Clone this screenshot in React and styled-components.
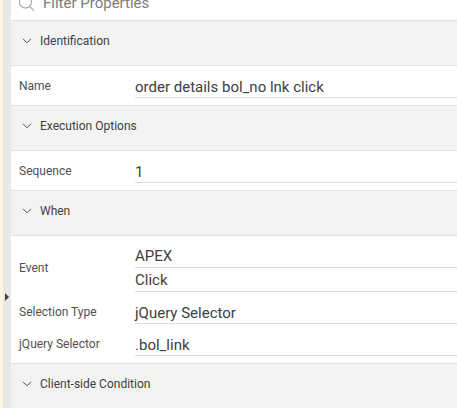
import { createGlobalStyle } from 'styled-components';
import styled from 'styled-components';

const GlobalStyle = createGlobalStyle`
  html, body {
    margin: 0;
    padding: 0;
    width: 457px;
    height: 408px;
    overflow: hidden;
    background: #fff;
  }
`;

const Page = styled.div`
  display: flex;
  width: 457px;
  height: 408px;
  overflow: hidden;
  font-family: Roboto, 'Liberation Sans', sans-serif;
`;

const Edge = styled.div`
  width: 3px;
  background: #fdf5e1;
`;

const Splitter = styled.div`
  position: relative;
  width: 8px;
  background: #e8e8e8;
`;

const Grip = styled.span`
  position: absolute;
  top: 293px;
  left: 2px;
  width: 0;
  height: 0;
  border-top: 4px solid transparent;
  border-bottom: 4px solid transparent;
  border-left: 4px solid #404040;
`;

const Panel = styled.div`
  flex: 1;
  min-width: 0;
`;

const FilterBar = styled.div`
  display: flex;
  align-items: flex-end;
  gap: 6px;
  height: 13px;
  padding: 0 0 7px 8px;
  border-bottom: 1px solid #e0e0e0;
  color: #7c7c7c;
  font-size: 15px;
  line-height: 20px;
`;

const FilterIcon = styled.svg`
  width: 18px;
  height: 18px;
  flex: none;
`;

const Header = styled.div`
  display: flex;
  align-items: flex-start;
  gap: 8px;
  height: ${(p) => p.$height || 44}px;
  padding: 11px 0 0 11px;
  box-sizing: border-box;
  background: #f3f3f3;
  color: #404040;
  font-size: 12px;
  line-height: 18px;
`;

const Chevron = styled.svg`
  width: 10px;
  height: 6px;
  margin-top: 6px;
  flex: none;
`;

const Section = styled.div`
  border-top: 1px solid #e0e0e0;
  border-bottom: 1px solid #e0e0e0;
  padding-bottom: 7px;
`;

const Row = styled.div`
  display: grid;
  grid-template-columns: 116px 1fr;
  align-items: center;
  padding-left: 8px;
`;

const Label = styled.label`
  padding-top: 8px;
  color: #505050;
  font-size: 12px;
  line-height: 16px;
`;

const Fields = styled.div`
  display: flex;
  flex-direction: column;
`;

const Field = styled.div`
  padding: ${(p) => p.$padding || '11px 0 0'};
  border-bottom: 1px solid #dedede;
  color: #404040;
  font-size: 15px;
  line-height: 20px;
  white-space: nowrap;
`;

const sections = [
  {
    title: 'Identification',
    rows: [{ label: 'Name', values: [{ text: 'order details bol_no lnk click' }] }],
  },
  {
    title: 'Execution Options',
    rows: [{ label: 'Sequence', values: [{ text: '1' }] }],
  },
  {
    title: 'When',
    rows: [
      {
        label: 'Event',
        values: [
          { text: 'APEX', padding: '10px 0 1px' },
          { text: 'Click', padding: '2px 0 1px' },
        ],
      },
      { label: 'Selection Type', values: [{ text: 'jQuery Selector' }] },
      { label: 'jQuery Selector', values: [{ text: '.bol_link' }] },
    ],
  },
];

const ChevronIcon = () => (
  <Chevron viewBox="0 0 10 6" fill="none" stroke="#505050" strokeWidth="1">
    <path d="M1 .8 5 4.8 9 .8" />
  </Chevron>
);

const App = () => {
  return (
    <Page>
      <GlobalStyle />
      <Edge />
      <Splitter>
        <Grip />
      </Splitter>
      <Panel>
        <FilterBar>
          <FilterIcon viewBox="0 0 18 18" fill="none" stroke="#a0a8b0" strokeWidth="1.1">
            <circle cx="6.5" cy="7" r="6" />
            <path d="M10.8 11.3 15 15.8" />
          </FilterIcon>
          Filter Properties
        </FilterBar>
        {sections.map((section) => (
          <div key={section.title}>
            <Header>
              <ChevronIcon />
              {section.title}
            </Header>
            <Section>
              {section.rows.map((row) => (
                <Row key={row.label}>
                  <Label>{row.label}</Label>
                  <Fields>
                    {row.values.map((value) => (
                      <Field key={value.text} $padding={value.padding}>
                        {value.text}
                      </Field>
                    ))}
                  </Fields>
                </Row>
              ))}
            </Section>
          </div>
        ))}
        <Header $height={45}>
          <ChevronIcon />
          Client-side Condition
        </Header>
      </Panel>
    </Page>
  );
};

export default App;
